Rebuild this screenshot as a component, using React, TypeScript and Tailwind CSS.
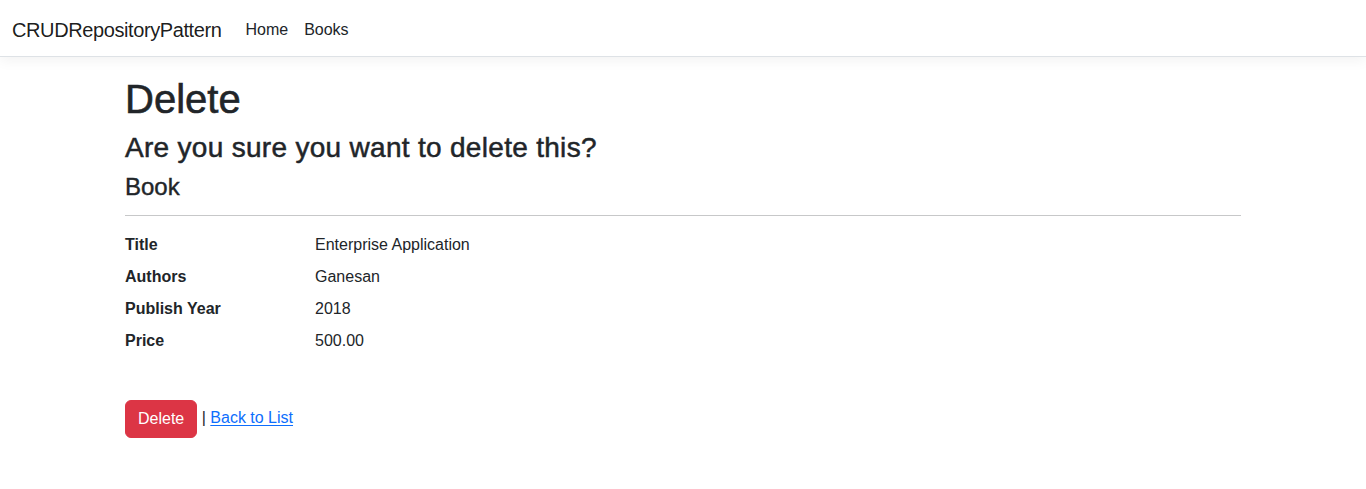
export default function App() {
  const rows = [
    { label: "Title", value: "Enterprise Application" },
    { label: "Authors", value: "Ganesan" },
    { label: "Publish Year", value: "2018" },
    { label: "Price", value: "500.00" },
  ];

  return (
    <div className="min-h-screen bg-white text-[#212529] font-['Liberation_Sans',Arial,sans-serif] text-base leading-6">
      <header>
        <nav className="flex items-center px-3 py-2 bg-white border-b border-[#dee2e6] shadow-[0_4px_12px_rgba(0,0,0,0.05)] mb-4">
          <a href="#" className="text-xl leading-[30px] pt-[7px] pb-[3px] mr-4 text-black/90 tracking-[-0.4px]">
            CRUDRepositoryPattern
          </a>
          <ul className="flex">
            <li>
              <a href="#" className="block px-2 pt-2.5 pb-1.5 text-[#212529]">Home</a>
            </li>
            <li>
              <a href="#" className="block px-2 pt-2.5 pb-1.5 text-[#212529]">Books</a>
            </li>
          </ul>
        </nav>
      </header>

      <div className="max-w-[1140px] mx-auto px-3">
        <main className="pb-3">
          <h1 className="text-[40px] leading-[1.2] font-medium pt-[2px] mb-1.5 [-webkit-text-stroke:0.6px]">Delete</h1>
          <h3 className="text-[28px] leading-[1.2] font-medium pt-[2px] mb-1.5 tracking-[0.3px] [-webkit-text-stroke:0.5px]">
            Are you sure you want to delete this?
          </h3>
          <div>
            <h4 className="text-2xl leading-[1.2] font-medium pt-[2px] -mb-[2px] [-webkit-text-stroke:0.4px]">Book</h4>
            <hr className="my-4 border-0 border-t border-[#212529] opacity-25" />
            <dl className="grid grid-cols-[190px_1fr] mb-4">
              {rows.map((row) => (
                <div key={row.label} className="contents">
                  <dt className="font-bold pt-px">{row.label}</dt>
                  <dd className="mb-[7px] pt-px">{row.value}</dd>
                </div>
              ))}
            </dl>
          </div>
          <form className="mt-10" onSubmit={(e) => e.preventDefault()}>
            <input
              type="submit"
              value="Delete"
              className="inline-block align-middle px-3 py-1.5 rounded-md border border-[#dc3545] bg-[#dc3545] text-white leading-6 cursor-pointer"
            />{" "}
            |{" "}
            <a href="#" className="text-[#0d6efd] underline">Back to List</a>
          </form>
        </main>
      </div>
    </div>
  );
}
